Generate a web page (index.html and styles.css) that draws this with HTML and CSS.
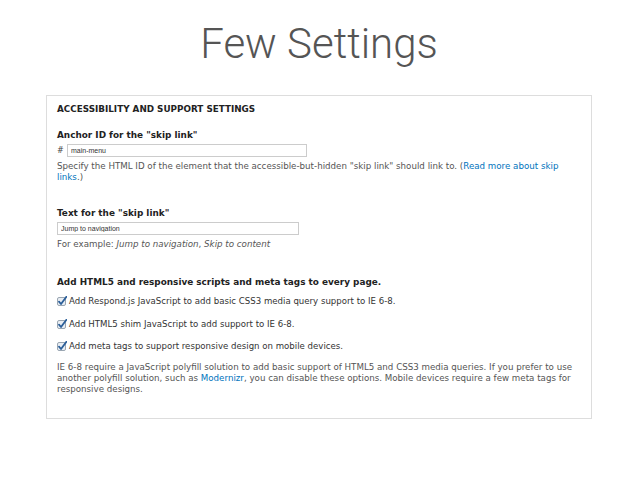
FILE: index.html
```html
<!DOCTYPE html>
<html lang="en">
<head>
    <meta charset="UTF-8">
    <title>Few Settings</title>
    <link rel="stylesheet" href="styles.css">
</head>
<body>
    <h1 class="slide-title">Few Settings</h1>
    <div class="panel">
        <h2 class="panel-title">ACCESSIBILITY AND SUPPORT SETTINGS</h2>

        <div class="field">
            <label class="field-label">Anchor ID for the "skip link"</label>
            <div class="field-row">
                <span class="prefix">#</span>
                <input type="text" class="text-input anchor-input" value="main-menu">
            </div>
            <div class="description">Specify the HTML ID of the element that the accessible-but-hidden "skip link" should link to. (<a href="#">Read more about skip links</a>.)</div>
        </div>

        <div class="field field-wide">
            <label class="field-label">Text for the "skip link"</label>
            <input type="text" class="text-input skip-input" value="Jump to navigation">
            <div class="description">For example: <em>Jump to navigation</em>, <em>Skip to content</em></div>
        </div>

        <div class="field">
            <label class="field-label">Add HTML5 and responsive scripts and meta tags to every page.</label>
            <div class="checks">
                <div class="check-item">
                    <svg class="check-box" viewBox="0 0 10 10"><rect x="0.5" y="1.5" width="8" height="8" rx="1.5" fill="#e9eef4" stroke="#9aa6b2"/><path d="M2 5.6 L4 8 L9.4 0.8" fill="none" stroke="#2c5f99" stroke-width="1.8" stroke-linecap="round" stroke-linejoin="round"/></svg>
                    Add Respond.js JavaScript to add basic CSS3 media query support to IE 6-8.
                </div>
                <div class="check-item">
                    <svg class="check-box" viewBox="0 0 10 10"><rect x="0.5" y="1.5" width="8" height="8" rx="1.5" fill="#e9eef4" stroke="#9aa6b2"/><path d="M2 5.6 L4 8 L9.4 0.8" fill="none" stroke="#2c5f99" stroke-width="1.8" stroke-linecap="round" stroke-linejoin="round"/></svg>
                    Add HTML5 shim JavaScript to add support to IE 6-8.
                </div>
                <div class="check-item">
                    <svg class="check-box" viewBox="0 0 10 10"><rect x="0.5" y="1.5" width="8" height="8" rx="1.5" fill="#e9eef4" stroke="#9aa6b2"/><path d="M2 5.6 L4 8 L9.4 0.8" fill="none" stroke="#2c5f99" stroke-width="1.8" stroke-linecap="round" stroke-linejoin="round"/></svg>
                    Add meta tags to support responsive design on mobile devices.
                </div>
            </div>
            <div class="description note">IE 6-8 require a JavaScript polyfill solution to add basic support of HTML5 and CSS3 media queries. If you prefer to use another polyfill solution, such as <a href="#">Modernizr</a>, you can disable these options. Mobile devices require a few meta tags for responsive designs.</div>
        </div>
    </div>
</body>
</html>
```

FILE: styles.css
```css
body {
    margin: 0;
    background-color: #fff;
    font-family: "DejaVu Sans", Verdana, sans-serif;
    color: #333;
}
.slide-title {
    margin: 0;
    padding-top: 19px;
    height: 77px;
    box-sizing: border-box;
    text-align: center;
    font-family: Roboto, "Liberation Sans", sans-serif;
    font-weight: 300;
    font-size: 42px;
    line-height: 50px;
    color: #555;
}
.panel {
    margin: 18px 46px 0 46px;
    width: 546px;
    height: 324px;
    box-sizing: border-box;
    border: 1px solid #ddd;
    padding: 7px 10px 0 10px;
}
.panel-title {
    margin: 0 0 14px 0;
    font-size: 8.8px;
    font-weight: bold;
    line-height: 12px;
    color: #222;
}
.field {
    margin-bottom: 24px;
}
.field-wide {
    margin-bottom: 26px;
}
.field-label {
    display: block;
    font-size: 8.9px;
    font-weight: bold;
    line-height: 12px;
    color: #222;
    margin-bottom: 3px;
}
.field-row {
    display: flex;
    align-items: center;
    gap: 4px;
}
.prefix {
    font-size: 8px;
    color: #444;
    width: 6px;
}
.text-input {
    display: block;
    height: 13px;
    box-sizing: border-box;
    border: 1px solid #ccc;
    padding: 0 3px;
    font-family: "Liberation Sans", Arial, sans-serif;
    font-size: 7px;
    color: #333;
    margin: 0;
}
.anchor-input {
    width: 240px;
}
.skip-input {
    width: 242px;
}
.description {
    margin-top: 4px;
    font-size: 8.7px;
    line-height: 11px;
    color: #555;
}
.description a {
    color: #0074bd;
    text-decoration: none;
}
.checks {
    margin-top: -1px;
}
.check-item {
    display: flex;
    align-items: center;
    gap: 2px;
    height: 22.5px;
    font-size: 8.6px;
    color: #333;
}
.check-box {
    width: 10px;
    height: 10px;
}
.note {
    margin-top: 4px;
}
```
